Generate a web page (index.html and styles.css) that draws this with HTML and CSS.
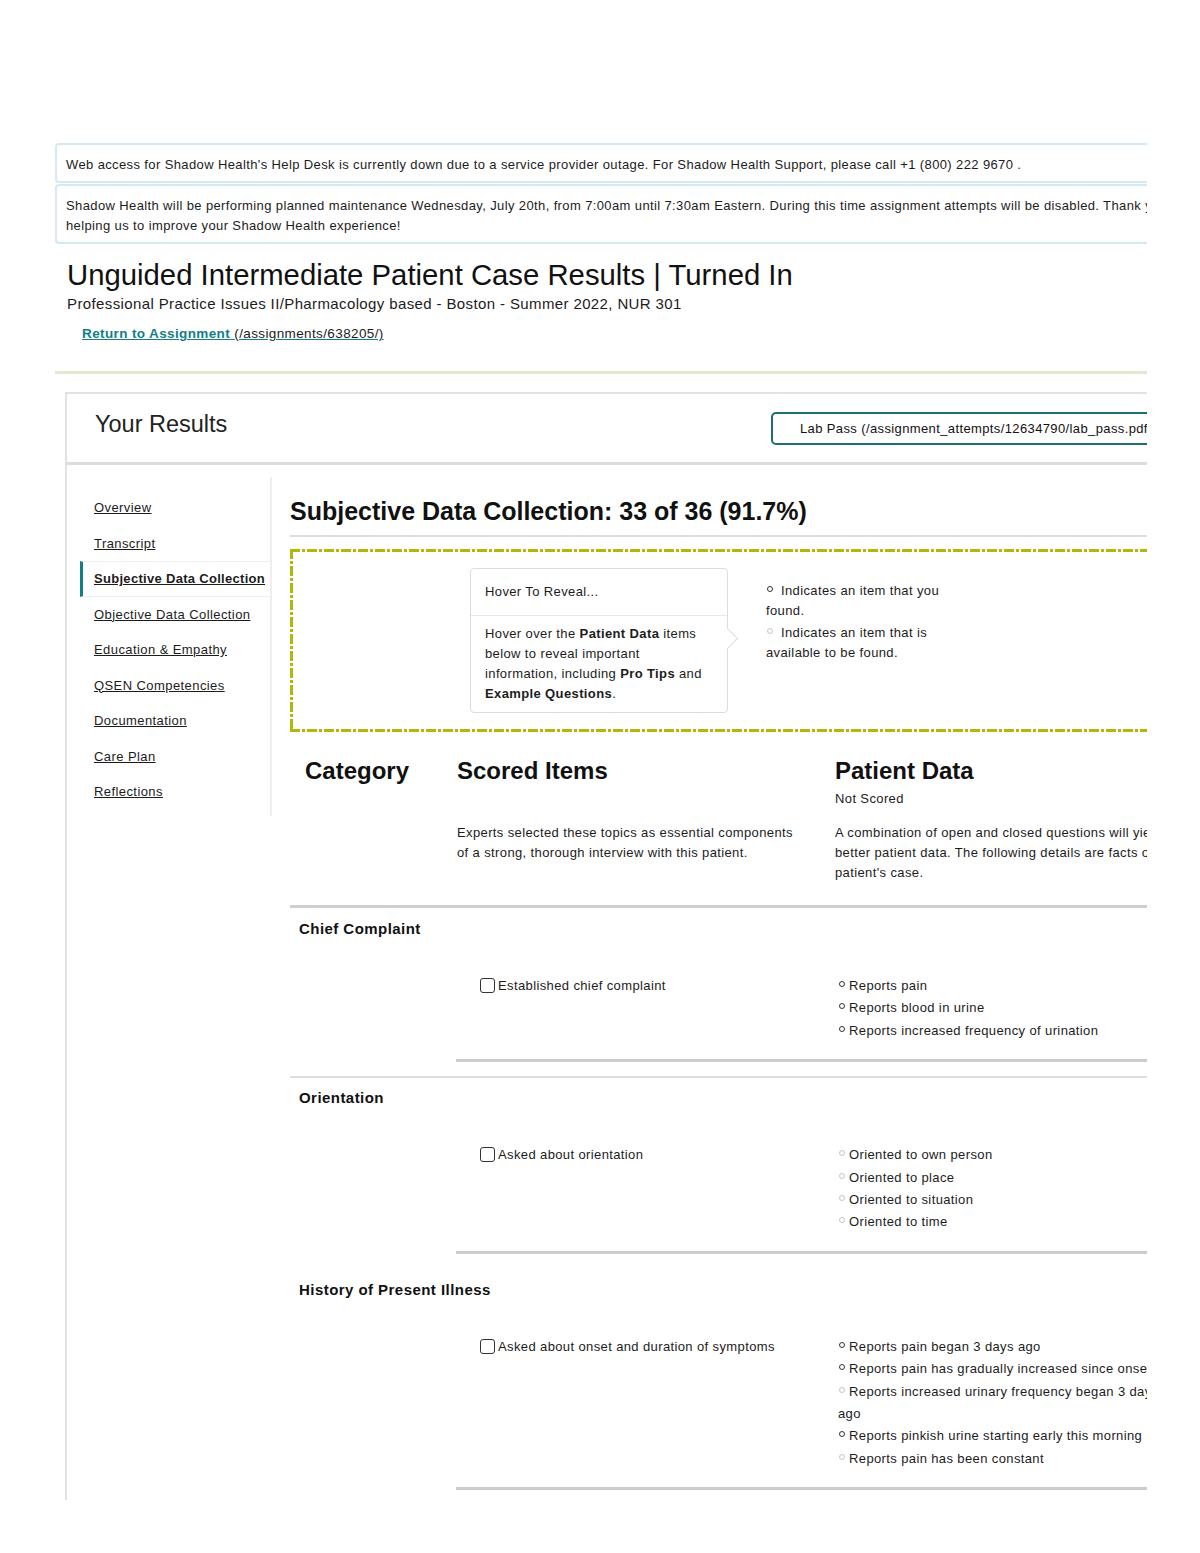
FILE: index.html
```html
<!DOCTYPE html>
<html lang="en">
<head>
<meta charset="utf-8">
<title>Unguided Intermediate Patient Case Results | Turned In</title>
<link rel="stylesheet" href="styles.css">
</head>
<body>
<div class="page">
  <div class="notice">Web access for Shadow Health's Help Desk is currently down due to a service provider outage. For Shadow Health Support, please call +1 (800) 222 9670 .</div>
  <div class="notice">Shadow Health will be performing planned maintenance Wednesday, July 20th, from 7:00am until 7:30am Eastern. During this time assignment attempts will be disabled. Thank you for helping us to improve your Shadow Health experience!</div>

  <h1 class="page-title">Unguided Intermediate Patient Case Results | Turned In</h1>
  <p class="page-sub">Professional Practice Issues II/Pharmacology based - Boston - Summer 2022, NUR 301</p>
  <p class="back"><a href="#" class="back-link"><b>Return to Assignment</b> <span>(/assignments/638205/)</span></a></p>

  <hr class="rule">

  <div class="card">
    <div class="card-head">
      <h2 class="card-title">Your Results</h2>
      <a href="#" class="lab-pass">Lab Pass (/assignment_attempts/12634790/lab_pass.pdf)</a>
    </div>

    <div class="card-body">
      <nav class="side">
        <a href="#" class="side-link">Overview</a>
        <a href="#" class="side-link">Transcript</a>
        <a href="#" class="side-link active">Subjective Data Collection</a>
        <a href="#" class="side-link">Objective Data Collection</a>
        <a href="#" class="side-link">Education &amp; Empathy</a>
        <a href="#" class="side-link">QSEN Competencies</a>
        <a href="#" class="side-link">Documentation</a>
        <a href="#" class="side-link">Care Plan</a>
        <a href="#" class="side-link">Reflections</a>
      </nav>

      <main class="main">
        <h2 class="section-title">Subjective Data Collection: 33 of 36 (91.7%)</h2>

        <div class="reveal">
          <div class="popover">
            <div class="popover-head">Hover To Reveal...</div>
            <div class="popover-body">Hover over the <b>Patient Data</b> items below to reveal important information, including <b>Pro Tips</b> and <b>Example Questions</b>.</div>
          </div>
          <div class="legend">
            <p><span class="dot found"></span> Indicates an item that you found.</p>
            <p><span class="dot"></span> Indicates an item that is available to be found.</p>
          </div>
        </div>

        <div class="cols-head">
          <h3 class="col-title col-cat">Category</h3>
          <h3 class="col-title">Scored Items</h3>
          <div>
            <h3 class="col-title">Patient Data</h3>
            <p class="not-scored">Not Scored</p>
          </div>
          <div></div>
          <p class="col-desc">Experts selected these topics as essential components of a strong, thorough interview with this patient.</p>
          <p class="col-desc">A combination of open and closed questions will yield better patient data. The following details are facts of the patient's case.</p>
        </div>

        <section class="cat ruled">
          <h4 class="cat-title">Chief Complaint</h4>
          <div class="cat-row">
            <div class="item"><span class="box"></span>Established chief complaint</div>
            <ul class="findings">
              <li><span class="dot found"></span>Reports pain</li>
              <li><span class="dot found"></span>Reports blood in urine</li>
              <li><span class="dot found"></span>Reports increased frequency of urination</li>
            </ul>
          </div>
        </section>

        <section class="cat">
          <h4 class="cat-title">Orientation</h4>
          <div class="cat-row">
            <div class="item"><span class="box"></span>Asked about orientation</div>
            <ul class="findings">
              <li><span class="dot"></span>Oriented to own person</li>
              <li><span class="dot"></span>Oriented to place</li>
              <li><span class="dot"></span>Oriented to situation</li>
              <li><span class="dot"></span>Oriented to time</li>
            </ul>
          </div>
        </section>

        <section class="cat">
          <h4 class="cat-title">History of Present Illness</h4>
          <div class="cat-row">
            <div class="item"><span class="box"></span>Asked about onset and duration of symptoms</div>
            <ul class="findings">
              <li><span class="dot found"></span>Reports pain began 3 days ago</li>
              <li><span class="dot found"></span>Reports pain has gradually increased since onset</li>
              <li><span class="dot"></span>Reports increased urinary frequency began 3 days ago</li>
              <li><span class="dot found"></span>Reports pinkish urine starting early this morning</li>
              <li><span class="dot"></span>Reports pain has been constant</li>
            </ul>
          </div>
        </section>
      </main>
    </div>
  </div>
</div>
</body>
</html>
```

FILE: styles.css
```css
* {
  box-sizing: border-box;
}

body {
  margin: 0;
  background: #fff;
  color: #1c1c1c;
  font-family: "Liberation Sans", Arial, sans-serif;
  font-size: 13px;
  line-height: 20px;
  letter-spacing: 0.38px;
}

.page {
  margin-left: 55px;
  padding-top: 143px;
  width: 1092px;
  height: 1500px;
  overflow: hidden;
}

/* service notices */
.notice {
  width: 1150px;
  margin-bottom: 1px;
  padding: 10px 9px 6px;
  border: 2px solid #d2eaf1;
  border-radius: 4px;
}

.page-title {
  margin: 13px 0 0 12px;
  font-size: 29.3px;
  line-height: 36px;
  font-weight: normal;
  letter-spacing: 0;
  color: #111;
}

.page-sub {
  margin: 1px 0 0 12px;
  font-size: 15px;
  line-height: 20px;
}

.back {
  margin: 10px 0 0 27px;
  font-size: 13.5px;
}

.back-link {
  color: #137e86;
  text-decoration: underline;
  text-decoration-color: #137e86;
}

.back-link span {
  color: #1c1c1c;
}

.rule {
  margin: 27px 0 0 -2px;
  border: 0;
  height: 3px;
  background: #e3e8d2;
}

/* results card */
.card {
  margin: 18px 0 0 10px;
  width: 1160px;
  border-top: 2px solid #e2e2e2;
  border-left: 2px solid #e2e2e2;
}

.card-head {
  display: grid;
  grid-template-columns: 704px 1fr;
  align-items: start;
  height: 71px;
  padding-top: 15px;
  border-bottom: 3px solid #dcdcdc;
}

.card-title {
  margin: 1px 0 0;
  padding-left: 28px;
  font-size: 23.5px;
  line-height: 28px;
  font-weight: normal;
  letter-spacing: 0;
  color: #222;
}

.lab-pass {
  display: block;
  margin-top: 3px;
  height: 33px;
  padding: 5px 0 0 27px;
  border: 2px solid #1e6f74;
  border-radius: 5px;
  color: #111;
  text-decoration: none;
  white-space: nowrap;
}

.card-body {
  display: flex;
  align-items: flex-start;
}

/* section navigation */
.side {
  flex: 0 0 205px;
  display: flex;
  flex-direction: column;
  margin-top: 12px;
  padding: 13px 0 6px 13px;
  border-right: 2px solid #eeeeee;
}

.side-link {
  display: block;
  height: 35.5px;
  padding: 8px 0 0 11px;
  border-left: 3px solid transparent;
  color: #1c1c1c;
  font-size: 13px;
  letter-spacing: 0.42px;
  text-decoration: underline;
  white-space: nowrap;
}

.side-link.active {
  border-left-color: #137e86;
  border-top: 1px solid #eeeeee;
  border-bottom: 1px solid #eeeeee;
  padding-top: 7px;
  font-weight: bold;
  letter-spacing: 0.3px;
}

/* main column */
.main {
  flex: 1;
  padding: 31px 0 0 18px;
}

.section-title {
  margin: 0;
  padding-bottom: 9px;
  border-bottom: 2px solid #dddddd;
  font-size: 25px;
  line-height: 30px;
  letter-spacing: 0;
  color: #111;
}

.reveal {
  display: flex;
  align-items: flex-start;
  margin-top: 12px;
  padding: 19px 0 19px 180px;
  --dash: repeating-linear-gradient(90deg, #b3b70c 0 10px, transparent 10px 12px, #b3b70c 12px 15px, transparent 15px 17px);
  --dash-v: repeating-linear-gradient(180deg, #b3b70c 0 10px, transparent 10px 12px, #b3b70c 12px 15px, transparent 15px 17px);
  background:
    var(--dash) left top / 100% 3px no-repeat,
    var(--dash) left bottom / 100% 3px no-repeat,
    var(--dash-v) left top / 3px 100% no-repeat,
    var(--dash-v) right top / 3px 100% no-repeat;
}

.popover {
  position: relative;
  flex: 0 0 258px;
  border: 1px solid #dcdcdc;
  border-radius: 4px;
  background: #fff;
}

/* caret pointing toward the legend */
.popover::after {
  content: "";
  position: absolute;
  top: 62px;
  right: -8px;
  width: 14px;
  height: 14px;
  background: #fff;
  border-top: 1px solid #dcdcdc;
  border-right: 1px solid #dcdcdc;
  transform: rotate(45deg);
}

.popover-head {
  padding: 13px 14px 13px;
  border-bottom: 1px solid #e8e8e8;
}

.popover-body {
  padding: 8px 14px;
}

.legend {
  width: 182px;
  margin: 13px 0 0 38px;
}

.legend p {
  margin: 0 0 2px;
}

.dot {
  display: inline-block;
  width: 6px;
  height: 6px;
  margin: 0 4px 0 1px;
  border: 1.5px solid #c4c4c4;
  border-radius: 50%;
  vertical-align: 3px;
}

.dot.found {
  border-color: #333;
}

/* column headings */
.cols-head {
  display: grid;
  grid-template-columns: 166px 379px 365px;
  margin-top: 25px;
  padding-bottom: 22px;
  border-bottom: 3px solid #cfcfcf;
}

.col-title {
  margin: 0;
  font-size: 24px;
  line-height: 28px;
  letter-spacing: 0;
  color: #111;
}

.col-cat {
  padding-left: 15px;
}

.col-title + .col-title {
  padding-left: 1px;
}

.not-scored {
  margin: 4px 0 0;
}

.col-desc {
  margin: 14px 0 0;
}

.col-desc:first-of-type {
  padding-left: 1px;
  padding-right: 30px;
}

/* category groups */
.cat {
  padding-top: 10px;
}

.cat:first-of-type {
  padding-top: 11px;
}

.cat.ruled {
  border-bottom: 2px solid #dedede;
}

.cat-title {
  margin: 0;
  padding-left: 9px;
  font-size: 15px;
  line-height: 20px;
  letter-spacing: 0.45px;
  color: #111;
}

.cat-row {
  display: grid;
  grid-template-columns: 379px 330px;
  margin: 36px 0 16px 166px;
  padding-bottom: 17px;
  border-bottom: 3px solid #cccccc;
  line-height: 22.4px;
}

.cat.ruled .cat-row {
  margin-bottom: 14px;
}

.item {
  padding-left: 24px;
}

.box {
  display: inline-block;
  width: 15px;
  height: 15px;
  margin-right: 3px;
  border: 1.5px solid #333;
  border-radius: 3px;
  vertical-align: -3px;
}

.findings {
  margin: 0;
  padding: 0 0 0 3px;
  list-style: none;
}
```
